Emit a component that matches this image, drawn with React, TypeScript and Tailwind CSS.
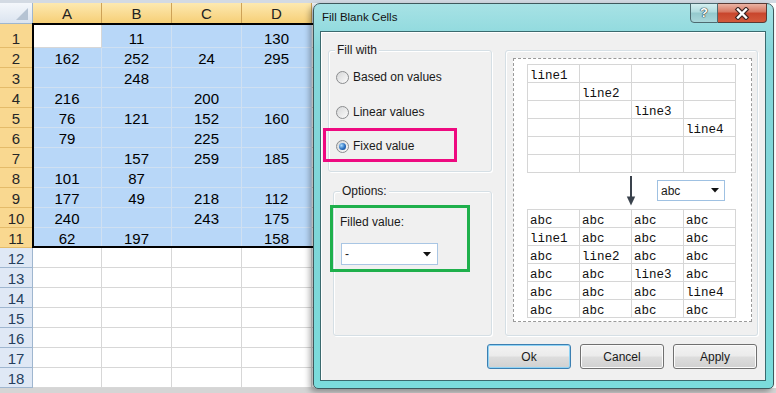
import React from "react";

const DATA: string[][] = [
  ["", "11", "", "130"],
  ["162", "252", "24", "295"],
  ["", "248", "", ""],
  ["216", "", "200", ""],
  ["76", "121", "152", "160"],
  ["79", "", "225", ""],
  ["", "157", "259", "185"],
  ["101", "87", "", ""],
  ["177", "49", "218", "112"],
  ["240", "", "243", "175"],
  ["62", "197", "", "158"],
];

const COLS = ["A", "B", "C", "D", "", "", ""];
const COLW = ["w-[69px]", "w-[70px]", "w-[70px]", "w-[70px]", "w-[70px]", "w-[70px]", "w-[70px]"];

const TOP = [
  ["line1", "", "", ""],
  ["", "line2", "", ""],
  ["", "", "line3", ""],
  ["", "", "", "line4"],
  ["", "", "", ""],
  ["", "", "", ""],
];
const BOTTOM = [
  ["abc", "abc", "abc", "abc"],
  ["line1", "abc", "abc", "abc"],
  ["abc", "line2", "abc", "abc"],
  ["abc", "abc", "line3", "abc"],
  ["abc", "abc", "abc", "line4"],
  ["abc", "abc", "abc", "abc"],
];

function SheetRow({ n }: { n: number }) {
  const sel = n <= 11;
  const vals = sel ? DATA[n - 1] : [];
  return (
    <div className={`flex shrink-0 ${n === 1 ? "h-[24px]" : "h-[20px]"}`}>
      <div
        className={
          sel
            ? "w-[33px] shrink-0 flex items-end justify-center border-r border-b border-r-[#c99b4c] border-b-[#e4bb6a] bg-[#f9d890] text-[15px] leading-[17px] text-[#262626]"
            : "w-[33px] shrink-0 flex items-end justify-center border-r border-b border-[#9fb6cf] bg-[#dfe8f5] text-[15px] leading-[17px] text-[#253f5e]"
        }
      >
        {n}
      </div>
      {COLS.map((c, i) => {
        const inSel = sel && i < 4;
        const active = n === 1 && i === 0;
        const cls =
          inSel && !active
            ? "bg-[#b8d7f8] border-[#cfe0f2]"
            : "bg-white border-[#d7d7d7]";
        return (
          <div
            key={i}
            className={`${COLW[i]} shrink-0 flex items-end justify-center border-r border-b text-[15px] leading-[17px] text-black ${cls}`}
          >
            {inSel ? vals[i] : ""}
          </div>
        );
      })}
    </div>
  );
}

function Radio({ label, checked }: { label: string; checked?: boolean }) {
  return (
    <div className="flex items-center h-[16px]">
      <span className="w-[13px] h-[13px] shrink-0 rounded-full border border-[#8a8c8e] bg-gradient-to-br from-[#d6d7d8] to-[#fbfbfb] flex items-center justify-center">
        {checked && (
          <span className="w-[7px] h-[7px] rounded-full bg-[radial-gradient(circle_at_35%_35%,#a9dcff,#2a6fbf_55%,#0e3f80)]" />
        )}
      </span>
      <span className="ml-[4px] text-[12px] leading-[14px]">{label}</span>
    </div>
  );
}

function MiniTable({ rows }: { rows: string[][] }) {
  return (
    <div className="grid grid-cols-[repeat(4,52px)] w-[209px] border-l border-t border-[#d6d6d6] bg-white">
      {rows.flat().map((t, i) => (
        <div
          key={i}
          className="h-[18px] border-r border-b border-[#d6d6d6] pl-[2px] pt-[4px] text-[12.5px] leading-[14px] font-['Liberation_Mono',monospace] text-[#111] whitespace-nowrap"
        >
          {t}
        </div>
      ))}
    </div>
  );
}

function Btn({ label, focused }: { label: string; focused?: boolean }) {
  return (
    <div
      className={`w-[84px] h-[25px] rounded-[3px] border flex items-center justify-center text-[12px] leading-[14px] text-[#1a1a1a] bg-[linear-gradient(#f3f3f3,#ebebeb_48%,#dddddd_52%,#d0d0d0)] ${
        focused
          ? "border-[#3c7fb1] shadow-[inset_0_0_0_1px_#8fd3f5]"
          : "border-[#707070] shadow-[inset_0_0_0_1px_#fbfbfb]"
      }`}
    >
      {label}
    </div>
  );
}

function Dialog() {
  return (
    <div className="absolute left-[313px] top-[3px] w-[461px] h-[386px] flex flex-col rounded-t-[7px] rounded-b-[5px] border border-[#3e585c] bg-[linear-gradient(#a7e2e5,#85d6da_12%,#7ed6d8_60%,#7bdcdc)] shadow-[-3px_3px_6px_rgba(0,0,0,0.35)] text-[#1a1a1a]">
      <div className="h-[27px] shrink-0 flex items-start">
        <span className="ml-[8px] mt-[6px] text-[11.5px] leading-[14px] text-[#121212]">Fill Blank Cells</span>
        <div className="ml-auto mr-[6px] -mt-[1px] flex">
          <div className="w-[28px] h-[20px] rounded-bl-[4px] border border-[#4d6a70] bg-[linear-gradient(#d3eff0,#b0dcdf_45%,#94c9cd_50%,#a9d7da)] flex items-center justify-center">
            <span className="text-[13px] leading-[14px] font-bold text-white [text-shadow:0_0_1px_#203438,0_0_1px_#203438,0_0_1px_#203438]">?</span>
          </div>
          <div className="w-[49px] h-[20px] rounded-br-[4px] border border-l-0 border-[#5b3a34] bg-[linear-gradient(#eab3a4,#d7755f_45%,#c8452c_50%,#d35a3c)] flex items-center justify-center">
            <svg width="16" height="13" viewBox="0 0 16 13">
              <path d="M4 2.5 L12 10.5 M12 2.5 L4 10.5" stroke="#3b2522" strokeWidth="4.6" strokeLinecap="square" />
              <path d="M4 2.5 L12 10.5 M12 2.5 L4 10.5" stroke="#ffffff" strokeWidth="2.4" strokeLinecap="square" />
            </svg>
          </div>
        </div>
      </div>

      <div className="ml-[6px] mr-[7px] mb-[7px] flex-1 flex flex-col border border-[#3b6a6e] bg-[#f0f0f0] shadow-[inset_1px_1px_0_#ffffff]">
        <div className="flex pl-[7px] pt-[18px]">
          <div className="flex flex-col w-[164px]">
            <div className="relative w-[164px] h-[122px] rounded-[3px] border border-[#d5dfe5] shadow-[inset_1px_1px_0_#fff,1px_1px_0_#fff] flex flex-col pl-[7px]">
              <span className="absolute -top-[8px] left-[6px] px-[2px] bg-[#f0f0f0] text-[12px] leading-[14px]">Fill with</span>
              <div className="mt-[18px]">
                <Radio label="Based on values" />
              </div>
              <div className="mt-[19px]">
                <Radio label="Linear values" />
              </div>
              <div className="mt-[18px]">
                <Radio label="Fixed value" checked />
              </div>
            </div>
            <div className="relative ml-[5px] mt-[19px] w-[159px] h-[145px] rounded-[3px] border border-[#d5dfe5] shadow-[inset_1px_1px_0_#fff,1px_1px_0_#fff] flex flex-col pl-[6px] pt-[23px]">
              <span className="absolute -top-[8px] left-[6px] px-[2px] bg-[#f0f0f0] text-[12px] leading-[14px]">Options:</span>
              <span className="text-[12px] leading-[14px]">Filled value:</span>
              <div className="ml-[1px] mt-[14px] w-[97px] h-[22px] bg-white border border-[#a9c6e4] flex items-center pl-[3px] pr-[6px]">
                <span className="text-[12px] leading-[14px]">-</span>
                <svg className="ml-auto" width="8" height="5" viewBox="0 0 8 5">
                  <path d="M0 0 H8 L4 4.5 Z" fill="#111" />
                </svg>
              </div>
            </div>
          </div>

          <div className="ml-[13px] w-[253px] h-[286px] rounded-[3px] border border-[#d5dfe5] shadow-[inset_1px_1px_0_#fff,1px_1px_0_#fff] pl-[7px] pt-[7px]">
            <div className="w-[239px] h-[264px] border border-dashed border-[#9a9a9a] bg-white flex flex-col pl-[13px] pt-[5px]">
              <MiniTable rows={TOP} />
              <div className="h-[36px] flex items-start">
                <svg className="ml-[99px] mt-[3px]" width="10" height="30" viewBox="0 0 10 30">
                  <path d="M5 0 V22" stroke="#3a424c" strokeWidth="2" />
                  <path d="M0.8 20.5 H9.2 L5 29.5 Z" fill="#3a424c" />
                </svg>
                <div className="ml-[21px] mt-[7px] w-[68px] h-[21px] border border-[#9fc1e2] bg-white flex items-center pl-[3px] pr-[5px]">
                  <span className="text-[12px] leading-[14px]">abc</span>
                  <svg className="ml-auto" width="8" height="5" viewBox="0 0 8 5">
                    <path d="M0 0 H8 L4 4.5 Z" fill="#111" />
                  </svg>
                </div>
              </div>
              <MiniTable rows={BOTTOM} />
            </div>
          </div>
        </div>

        <div className="flex justify-end gap-[9px] pr-[8px] mt-[8px]">
          <Btn label="Ok" focused />
          <Btn label="Cancel" />
          <Btn label="Apply" />
        </div>
      </div>

      <div className="absolute left-[9px] top-[124px] w-[134px] h-[34px] border-[3px] border-[#ee0a80] pointer-events-none" />
      <div className="absolute left-[16px] top-[201px] w-[140px] h-[67px] border-[3px] border-[#1fb04c] pointer-events-none" />
    </div>
  );
}

export default function App() {
  const rows = Array.from({ length: 18 }, (_, i) => i + 1);
  return (
    <div className="relative w-[776px] h-[393px] overflow-hidden bg-white font-['Liberation_Sans',Arial,sans-serif]">
      <div className="flex flex-col">
        <div className="h-[3px] shrink-0 bg-[#d3dae3]" />
        <div className="flex h-[21px] shrink-0">
          <div className="w-[33px] shrink-0 border-r border-b border-[#9fb6cf] bg-gradient-to-b from-[#f4f7fb] to-[#dbe4f0] flex items-end justify-end pr-[4px] pb-[3px]">
            <svg width="12" height="12" viewBox="0 0 12 12">
              <path d="M12 0 V12 H0 Z" fill="#b5c3d3" />
            </svg>
          </div>
          {COLS.map((c, i) => (
            <div
              key={i}
              className={`${COLW[i]} shrink-0 border-r border-b flex items-center justify-center text-[15px] leading-[17px] ${
                i < 4
                  ? "bg-gradient-to-b from-[#fde9b0] to-[#f6cf76] border-r-[#cda257] border-b-[#d9ae5f] text-[#222]"
                  : "bg-gradient-to-b from-[#f4f7fb] to-[#dbe4f0] border-[#9fb6cf] text-[#27405f]"
              }`}
            >
              {c}
            </div>
          ))}
        </div>
        {rows.map((n) => (
          <SheetRow key={n} n={n} />
        ))}
        <div className="h-[5px] shrink-0 bg-[#d5d5d5]" />
      </div>
      <div className="absolute left-[32px] top-[23px] w-[300px] h-[225px] border-2 border-black pointer-events-none" />
      <Dialog />
    </div>
  );
}
